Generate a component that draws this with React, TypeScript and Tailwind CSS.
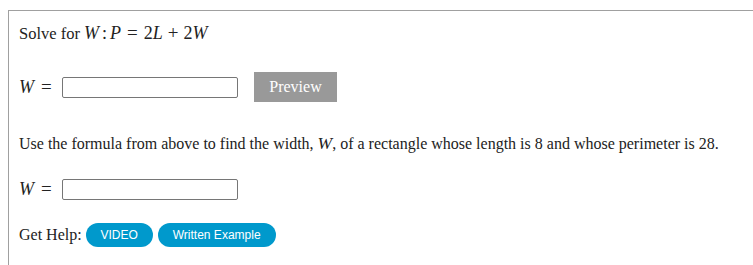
import React from "react";

const V = ({ children }: { children: React.ReactNode }) => (
  <span className="italic">{children}</span>
);

export default function App() {
  return (
    <div className="min-h-[265px] bg-white pt-[10px] pl-[8px] font-['Liberation_Serif',serif] text-[16px] text-[#222]">
      <div className="border-l border-t border-[#a0a0a0] pl-[10px] pt-[13px] pb-[20px] min-h-[255px]">
        <div className="h-[18px] leading-[18px] text-[16.5px] whitespace-nowrap">
          Solve for{" "}
          <span className="text-[18px]">
            <V>W</V>
            <span className="mx-[3px]">:</span>
            <V>P</V>
            <span className="mx-[6px] text-[19px]">=</span>2<V>L</V>
            <span className="mx-[5px] text-[19px]">+</span>2<V>W</V>
          </span>
        </div>

        <div className="mt-[30px] flex h-[30px] items-center">
          <span className="text-[18px] w-[43px] shrink-0 whitespace-nowrap">
            <V>W</V>
            <span className="ml-[7px] text-[19px]">=</span>
          </span>
          <div className="h-[21px] w-[176px] rounded-[2px] border border-[#767676] bg-white" />
          <div className="ml-[16px] flex h-[30px] w-[83px] items-center justify-center bg-[#999999] text-[16px] text-white">
            Preview
          </div>
        </div>

        <div className="mt-[32px] h-[18px] leading-[18px] text-[16px] whitespace-nowrap">
          Use the formula from above to find the width, <span className="text-[17.5px]"><V>W</V></span>, of a rectangle whose length is 8 and whose perimeter is 28.
        </div>

        <div className="mt-[27px] flex h-[21px] items-center">
          <span className="text-[18px] w-[43px] shrink-0 whitespace-nowrap">
            <V>W</V>
            <span className="ml-[7px] text-[19px]">=</span>
          </span>
          <div className="h-[21px] w-[176px] rounded-[2px] border border-[#767676] bg-white" />
        </div>

        <div className="mt-[23px] flex h-[24px] items-center">
          <span className="text-[16px] mr-[4px]">Get Help:</span>
          <span className="flex h-[24px] w-[67px] items-center justify-center rounded-full bg-[#0099cc] font-['Liberation_Sans',Arial,sans-serif] text-[12px] text-white">
            VIDEO
          </span>
          <span className="ml-[5px] flex h-[24px] w-[118px] items-center justify-center rounded-full bg-[#0099cc] font-['Liberation_Sans',Arial,sans-serif] text-[12px] text-white">
            Written Example
          </span>
        </div>
      </div>
    </div>
  );
}
